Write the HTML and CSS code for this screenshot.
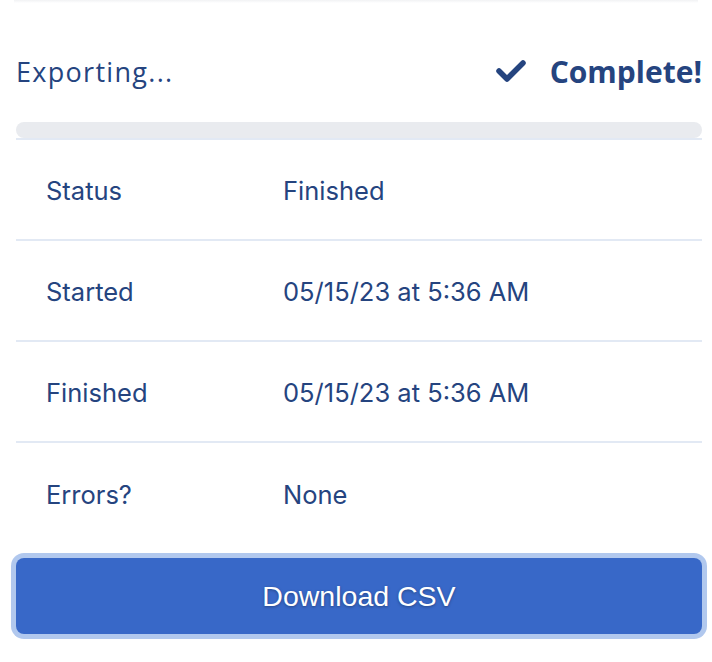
FILE: index.html
```html
<!DOCTYPE html>
<html lang="en">

<head>
    <meta charset="UTF-8">
    <meta name="viewport" content="width=device-width, initial-scale=1.0">
    <title>Export</title>
    <link rel="stylesheet" href="styles.css">
</head>

<body>
    <div class="top-edge"></div>
    <div class="export">
        <div class="export-head">
            <div class="export-title">Exporting...</div>
            <div class="export-done">
                <svg class="check" width="30" height="24" viewBox="0 0 30 24">
                    <path d="M3 12 L11 20 L27 4" fill="none" stroke="#25447f" stroke-width="5.5" stroke-linecap="round" stroke-linejoin="round"/>
                </svg>
                <span>Complete!</span>
            </div>
        </div>
        <div class="progress"></div>
        <div class="details">
            <div class="detail-row">
                <div class="detail-label">Status</div>
                <div class="detail-value">Finished</div>
            </div>
            <div class="detail-row">
                <div class="detail-label">Started</div>
                <div class="detail-value">05/15/23 at 5:36 AM</div>
            </div>
            <div class="detail-row">
                <div class="detail-label">Finished</div>
                <div class="detail-value">05/15/23 at 5:36 AM</div>
            </div>
            <div class="detail-row">
                <div class="detail-label">Errors?</div>
                <div class="detail-value">None</div>
            </div>
        </div>
        <button class="download">Download CSV</button>
    </div>
</body>

</html>
```

FILE: styles.css
```css
body {
    margin: 0;
    background: #fff;
    font-family: "Open Sans", "Noto Sans", sans-serif;
    color: #25447f;
}

.top-edge {
    height: 3px;
    margin: 0 14px;
    background: linear-gradient(#f1f2f4, #fff);
}

.export {
    padding: 0 10px 10px 16px;
}

.export-head {
    display: flex;
    justify-content: space-between;
    align-items: center;
    height: 48px;
    margin-top: 44px;
}

.export-title {
    font-size: 27px;
    letter-spacing: 1.3px;
}

.export-done {
    display: flex;
    align-items: center;
    gap: 24px;
    font-size: 30px;
    font-weight: 700;
}

.progress {
    height: 16px;
    margin-top: 27px;
    border-radius: 8px;
    background: #e9ebef;
}

.details {
    border-top: 2px solid #e2e9f4;
}

.detail-row {
    display: flex;
    align-items: center;
    box-sizing: border-box;
    height: 101px;
    padding: 1px 0 0 30px;
    font-family: Inter, "Noto Sans", sans-serif;
    font-size: 25.5px;
    border-bottom: 2px solid #e2e9f4;
}

.detail-row:last-child {
    border-bottom: none;
}

.detail-label {
    width: 237px;
}

.download {
    display: block;
    width: 100%;
    height: 76px;
    margin-top: 14px;
    border: none;
    border-radius: 8px;
    background: #3868c8;
    box-shadow: 0 0 0 5px #b1c8ee;
    color: #fff;
    font-family: "Liberation Sans", Arial, sans-serif;
    font-size: 28.5px;
    text-shadow: 0 1px 3px rgba(0, 0, 0, 0.35);
}
```
